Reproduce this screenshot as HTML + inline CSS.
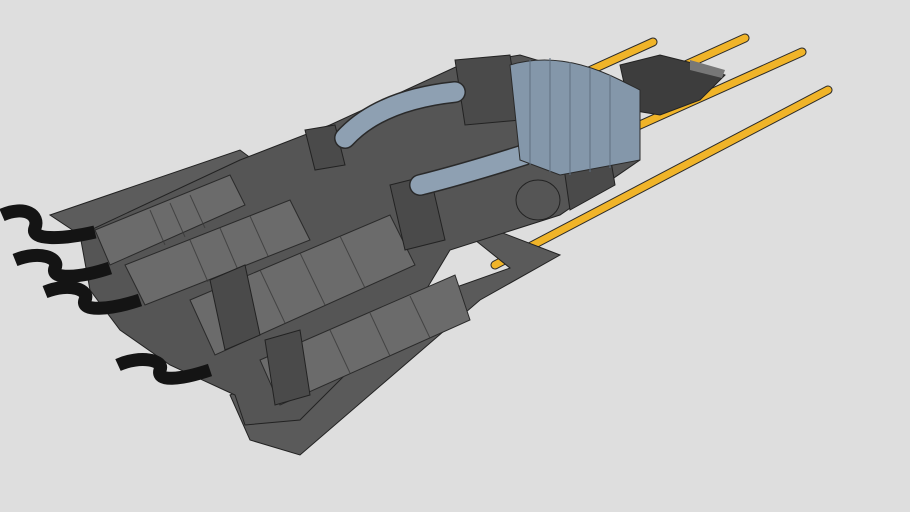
<!DOCTYPE html>
<html><head><style>html,body{margin:0;padding:0;background:#dedede;width:910px;height:512px;overflow:hidden}</style></head>
<body>
<svg width="910" height="512" viewBox="0 0 910 512" xmlns="http://www.w3.org/2000/svg">
<rect width="910" height="512" fill="#dedede"/>
<!-- yellow rods behind -->
<g stroke="#2a2a2a" stroke-width="9" stroke-linecap="round" fill="none">
<line x1="470" y1="125" x2="653" y2="42"/>
<line x1="520" y1="140" x2="745" y2="38"/>
<line x1="440" y1="215" x2="802" y2="52"/>
<line x1="495" y1="265" x2="828" y2="90"/>
</g>
<g stroke="#f0b429" stroke-width="7" stroke-linecap="round" fill="none">
<line x1="470" y1="125" x2="653" y2="42"/>
<line x1="520" y1="140" x2="745" y2="38"/>
<line x1="440" y1="215" x2="802" y2="52"/>
<line x1="495" y1="265" x2="828" y2="90"/>
</g>
<!-- rear engine -->
<polygon points="620,65 660,55 700,65 725,75 700,100 660,115 630,110" fill="#3d3d3d" stroke="#222"/>
<polygon points="690,60 725,70 722,78 690,70" fill="#777"/>
<!-- platforms -->
<polygon points="50,215 240,150 260,165 80,235" fill="#5c5c5c" stroke="#222"/>
<polygon points="475,240 495,230 560,255 480,300 300,455 250,440 230,395 420,300 510,268" fill="#5a5a5a" stroke="#222"/>
<!-- main body -->
<polygon points="80,235 240,160 330,125 460,65 520,55 620,85 640,160 560,215 450,250 420,300 300,420 245,425 235,395 170,365 120,330 90,290" fill="#555" stroke="#222"/>
<!-- cylinders -->
<g fill="#6b6b6b" stroke="#2a2a2a">
<polygon points="95,230 230,175 245,205 110,265"/>
<polygon points="125,265 290,200 310,240 145,305"/>
<polygon points="190,300 390,215 415,265 215,355"/>
<polygon points="260,360 455,275 470,320 280,405"/>
</g>
<g stroke="#3a3a3a" stroke-width="1" opacity="0.8">
<line x1="150" y1="210" x2="165" y2="245"/><line x1="170" y1="203" x2="185" y2="237"/><line x1="190" y1="195" x2="205" y2="228"/>
<line x1="190" y1="240" x2="208" y2="282"/><line x1="220" y1="228" x2="238" y2="270"/><line x1="250" y1="216" x2="268" y2="256"/>
<line x1="260" y1="270" x2="285" y2="323"/><line x1="300" y1="253" x2="325" y2="305"/><line x1="340" y1="236" x2="365" y2="288"/>
<line x1="330" y1="330" x2="350" y2="373"/><line x1="370" y1="313" x2="390" y2="356"/><line x1="410" y1="296" x2="430" y2="338"/>
</g>
<!-- blocks -->
<g fill="#4a4a4a" stroke="#222">
<polygon points="305,130 335,125 345,165 315,170"/>
<polygon points="390,185 430,175 445,240 405,250"/>
<polygon points="210,280 245,265 260,335 225,350"/>
<polygon points="265,340 300,330 310,395 275,405"/>
<polygon points="455,60 510,55 520,120 465,125"/>
<polygon points="555,105 600,95 615,185 570,210"/>
</g>
<!-- blue ducts -->
<g stroke="#2a2a2a" stroke-width="22" stroke-linecap="round" fill="none">
<path d="M345,138 Q380,100 455,92"/><path d="M420,185 Q480,170 570,140"/>
</g>
<g stroke="#8ea0b2" stroke-width="19" stroke-linecap="round" fill="none">
<path d="M345,138 Q380,100 455,92"/><path d="M420,185 Q480,170 570,140"/>
</g>
<!-- big barrel -->
<path d="M510,65 Q560,50 620,80 L640,90 L640,160 L560,175 L520,160 Z" fill="#8497aa" stroke="#2a2a2a"/>
<g stroke="#5f6f80"><line x1="530" y1="60" x2="530" y2="165"/><line x1="550" y1="58" x2="550" y2="172"/><line x1="570" y1="62" x2="570" y2="175"/><line x1="590" y1="68" x2="590" y2="172"/><line x1="610" y1="75" x2="610" y2="168"/></g>
<ellipse cx="538" cy="200" rx="22" ry="20" fill="#555" stroke="#222"/>
<!-- exhaust pipes -->
<g stroke="#141414" stroke-width="13" stroke-linecap="butt" fill="none">
<path d="M2,215 C25,205 40,215 35,228 C30,240 60,240 95,232"/>
<path d="M15,260 C40,250 60,258 55,268 C50,280 80,278 110,268"/>
<path d="M45,292 C70,282 90,290 85,300 C80,312 110,310 140,300"/>
<path d="M118,365 C140,355 165,360 160,370 C156,382 180,380 210,370"/>
</g>
</svg>
</body></html>
